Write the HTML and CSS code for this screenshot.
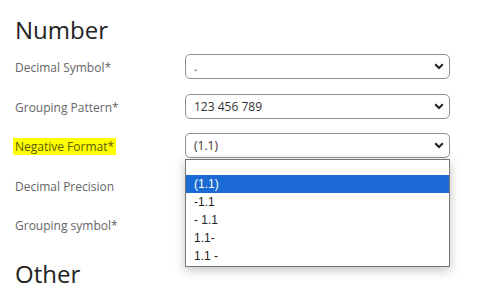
FILE: index.html
```html
<!DOCTYPE html>
<html lang="en">
<head>
    <meta charset="UTF-8">
    <meta name="viewport" content="width=device-width, initial-scale=1.0">
    <title>Number Settings</title>
    <link rel="stylesheet" href="styles.css">
</head>
<body>
    <div class="settings">
        <h2 class="section-title">Number</h2>

        <div class="form-row">
            <label for="decimalSymbol">Decimal Symbol*</label>
            <div class="select-wrap">
                <select id="decimalSymbol"><option>.</option></select>
                <svg class="chevron" width="10" height="7" viewBox="0 0 10 7"><path d="M1.2 1.3 L5 5 L8.8 1.3" fill="none" stroke="#222" stroke-width="2"/></svg>
            </div>
        </div>
        <div class="form-row">
            <label for="groupingPattern">Grouping Pattern*</label>
            <div class="select-wrap">
                <select id="groupingPattern"><option>123 456 789</option></select>
                <svg class="chevron" width="10" height="7" viewBox="0 0 10 7"><path d="M1.2 1.3 L5 5 L8.8 1.3" fill="none" stroke="#222" stroke-width="2"/></svg>
            </div>
        </div>
        <div class="form-row">
            <label for="negativeFormat"><span class="highlight">Negative Format*</span></label>
            <div class="select-wrap">
                <select id="negativeFormat"><option>(1.1)</option></select>
                <svg class="chevron" width="10" height="7" viewBox="0 0 10 7"><path d="M1.2 1.3 L5 5 L8.8 1.3" fill="none" stroke="#222" stroke-width="2"/></svg>
                <!-- open option list of the select -->
                <ul class="option-list">
                    <li class="empty"></li>
                    <li class="selected">(1.1)</li>
                    <li>-1.1</li>
                    <li>- 1.1</li>
                    <li>1.1-</li>
                    <li>1.1 -</li>
                </ul>
            </div>
        </div>
        <div class="form-row">
            <label for="decimalPrecision">Decimal Precision</label>
            <div class="select-wrap">
                <select id="decimalPrecision"><option></option></select>
            </div>
        </div>
        <div class="form-row">
            <label for="groupingSymbol">Grouping symbol*</label>
            <div class="select-wrap">
                <select id="groupingSymbol"><option></option></select>
            </div>
        </div>

        <h2 class="section-title other">Other</h2>
    </div>
</body>
</html>
```

FILE: styles.css
```css
body {
    font-family: "Open Sans", Arial, sans-serif;
    margin: 0;
    padding: 14px 15px 0 15px;
    background-color: #fff;
    color: #333;
    overflow: hidden;
}
.settings {
    display: flex;
    flex-direction: column;
    gap: 14.5px;
}
.section-title {
    font-size: 24px;
    font-weight: 400;
    line-height: 32px;
    margin: 0 0 -6.5px 0;
    color: #222;
}
.section-title.other {
    margin-top: 6px;
}
.form-row {
    display: flex;
    align-items: center;
    height: 25px;
}
label {
    width: 170px;
    font-size: 12px;
    color: #666;
    padding-top: 2px;
}
.highlight {
    background-color: #ffff00;
    color: #5a5a00;
    padding: 0 2px;
    margin-left: -2px;
    line-height: 17px;
    display: inline-block;
}
.select-wrap {
    position: relative;
    width: 265px;
    height: 25px;
}
select {
    -webkit-appearance: none;
    appearance: none;
    width: 100%;
    height: 25px;
    box-sizing: border-box;
    border: 1px solid #8f8f8f;
    border-radius: 5px;
    background: #fff;
    font-family: "Open Sans", Arial, sans-serif;
    font-size: 12px;
    color: #333;
    padding: 0 8px;
}
.chevron {
    position: absolute;
    right: 6px;
    top: 9px;
    pointer-events: none;
}
.option-list {
    position: absolute;
    top: 26px;
    left: 0;
    width: 265px;
    box-sizing: border-box;
    margin: 0;
    padding: 0 0 1px 0;
    list-style: none;
    background: #fff;
    border: 1px solid #767676;
    box-shadow: 0 3px 10px rgba(0, 0, 0, 0.25);
    font-family: "Liberation Sans", Arial, sans-serif;
    font-size: 12px;
    color: #222;
    z-index: 5;
}
.option-list li {
    height: 18px;
    line-height: 19px;
    padding-left: 8px;
}
.option-list li.empty {
    height: 15px;
}
.option-list li.selected {
    background-color: #1a69d4;
    color: #fff;
}
```
